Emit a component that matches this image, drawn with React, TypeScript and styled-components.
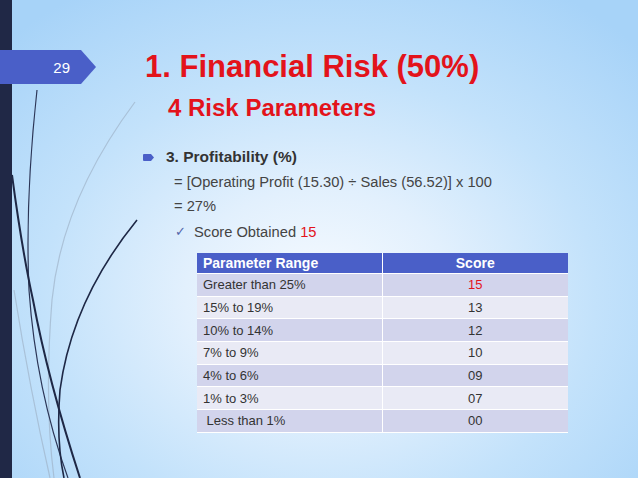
import React from "react";
import styled, { createGlobalStyle } from "styled-components";

const Global = createGlobalStyle`
  html, body { margin: 0; padding: 0; }
  body { width: 638px; height: 478px; overflow: hidden; font-family: "Liberation Sans", Arial, sans-serif; }
`;

const Slide = styled.div`
  position: relative;
  width: 638px;
  height: 478px;
  overflow: hidden;
  display: grid;
  grid-template-columns: 12px 1fr;
  background: radial-gradient(ellipse 70% 75% at 50% 62%, #f7fbff 0%, #e2f0fd 30%, #c3e2fb 62%, #a7d3f8 100%);
`;

const LeftBar = styled.div`
  background: #202846;
  height: 100%;
`;

const Decor = styled.svg`
  position: absolute;
  left: 0;
  top: 0;
  width: 638px;
  height: 478px;
  pointer-events: none;
`;

const Tab = styled.div`
  position: absolute;
  left: 0;
  top: 50px;
  width: 96px;
  height: 34px;
  background: #4a5fc8;
  clip-path: polygon(0 0, 81px 0, 96px 17px, 81px 34px, 0 34px);
  display: flex;
  align-items: center;
  justify-content: flex-end;
  padding-right: 26px;
  box-sizing: border-box;
  color: #ffffff;
  font-size: 15px;
`;

const Content = styled.div`
  position: relative;
  padding: 47px 0 0 133px;
  display: flex;
  flex-direction: column;
  align-items: flex-start;
`;

const Title = styled.h1`
  margin: 0;
  font-size: 31px;
  line-height: 40px;
  font-weight: 700;
  color: #e3131b;
`;

const Subtitle = styled.h2`
  margin: 6px 0 0 23px;
  font-size: 24px;
  line-height: 30px;
  font-weight: 700;
  color: #e3131b;
`;

const BulletRow = styled.div`
  margin: 22px 0 0 -2px;
  display: flex;
  align-items: center;
  gap: 12px;
  font-size: 15.5px;
  line-height: 24px;
  font-weight: 700;
  color: #333333;
`;

const Line = styled.div<{ $indent: number; $top?: number }>`
  margin-left: ${(p) => p.$indent}px;
  margin-top: ${(p) => p.$top ?? 0}px;
  font-size: 14.7px;
  line-height: 24px;
  color: #444444;
  display: flex;
  align-items: center;
  gap: 8px;
`;

const Red = styled.span`
  color: #e3131b;
`;

const Check = styled.span`
  color: #5566aa;
  font-size: 13px;
`;

const Table = styled.table`
  margin: 9px 0 0 52px;
  width: 371px;
  border-collapse: separate;
  border-spacing: 0;
  font-size: 13px;
  color: #333333;
`;

const Th = styled.th<{ $center?: boolean }>`
  height: 20px;
  padding: 0 6px;
  background: #4a5fc8;
  color: #ffffff;
  font-size: 14px;
  font-weight: 700;
  text-align: ${(p) => (p.$center ? "center" : "left")};
  border-right: ${(p) => (p.$center ? "0" : "1px solid #ffffff")};
  border-bottom: 1px solid #ffffff;
  width: 50%;
`;

const Td = styled.td<{ $center?: boolean; $odd: boolean; $red?: boolean }>`
  height: 21.7px;
  padding: 0 6px;
  background: ${(p) => (p.$odd ? "#d2d4ec" : "#e9eaf5")};
  text-align: ${(p) => (p.$center ? "center" : "left")};
  border-right: ${(p) => (p.$center ? "0" : "1px solid #ffffff")};
  border-bottom: 1px solid #ffffff;
  color: ${(p) => (p.$red ? "#e3131b" : "#333333")};
`;

const rows: [string, string][] = [
  ["Greater than 25%", "15"],
  ["15% to 19%", "13"],
  ["10% to 14%", "12"],
  ["7% to 9%", "10"],
  ["4% to 6%", "09"],
  ["1% to 3%", "07"],
  ["\u00a0Less than 1%", "00"],
];

export default function App() {
  return (
    <>
      <Global />
      <Slide>
        <Decor viewBox="0 0 638 478">
          <path d="M135,102 Q62,200 52,300 Q44,400 54,478" stroke="#9fb3c9" strokeWidth="1.2" fill="none" opacity="0.7" />
          <path d="M14,290 Q30,390 50,478" stroke="#9fb3c9" strokeWidth="1.2" fill="none" opacity="0.7" />
          <path d="M37,90 Q25,200 29,290 Q36,390 68,478" stroke="#2b3556" strokeWidth="1.2" fill="none" />
          <path d="M12,175 Q22,250 33,300 Q48,380 80,478" stroke="#1e2846" strokeWidth="2" fill="none" />
          <path d="M137,220 Q72,300 60,390 Q56,440 64,478" stroke="#1e2846" strokeWidth="1.6" fill="none" />
        </Decor>
        <LeftBar />
        <Tab>29</Tab>
        <Content>
          <Title>1. Financial Risk (50%)</Title>
          <Subtitle>4 Risk Parameters</Subtitle>
          <BulletRow>
            <svg width="11" height="7" viewBox="0 0 11 7">
              <path d="M1,0 H8 L11,3.5 L8,7 H1 Q0,7 0,6 V1 Q0,0 1,0 Z" fill="#4a5fc8" />
            </svg>
            <span>3. Profitability (%)</span>
          </BulletRow>
          <Line $indent={29} $top={1}>= [Operating Profit (15.30) ÷ Sales (56.52)] x 100</Line>
          <Line $indent={29}>= 27%</Line>
          <Line $indent={30} $top={2}>
            <Check>✓</Check>
            <span>
              Score Obtained <Red>15</Red>
            </span>
          </Line>
          <Table>
            <thead>
              <tr>
                <Th>Parameter Range</Th>
                <Th $center>Score</Th>
              </tr>
            </thead>
            <tbody>
              {rows.map(([range, score], i) => (
                <tr key={range}>
                  <Td $odd={i % 2 === 0}>{range}</Td>
                  <Td $center $odd={i % 2 === 0} $red={i === 0}>
                    {score}
                  </Td>
                </tr>
              ))}
            </tbody>
          </Table>
        </Content>
      </Slide>
    </>
  );
}
